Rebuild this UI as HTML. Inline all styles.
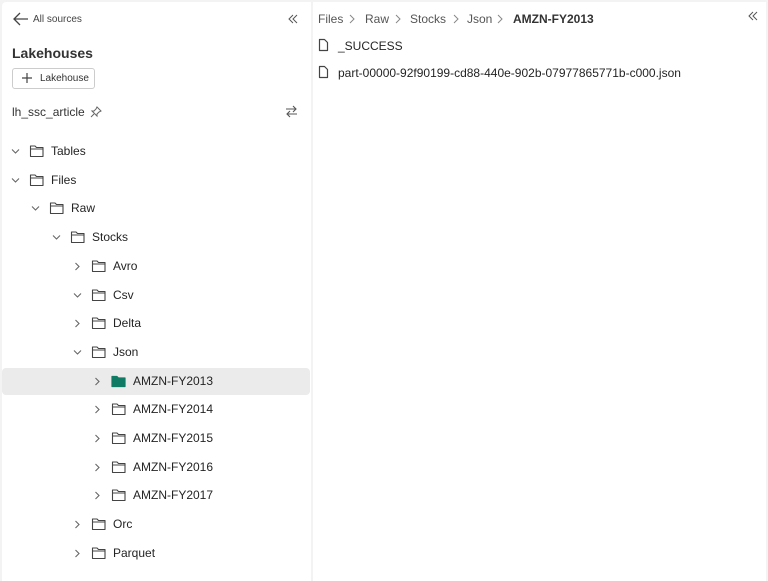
<!DOCTYPE html>
<html><head><meta charset="utf-8"><style>
*{margin:0;padding:0;box-sizing:border-box}
body{width:768px;height:581px;background:#f3f3f3;font-family:"Liberation Sans",sans-serif;color:#242424;position:relative;overflow:hidden}
.lp{position:absolute;left:2px;top:2px;width:309px;height:579px;background:#fff;border-radius:4px 0 0 0}
.rp{position:absolute;left:313px;top:2px;width:453px;height:579px;background:#fff}
.t{position:absolute;font-size:12px;white-space:nowrap}
.row{position:absolute;left:0;width:308px;height:27px}
.row .c{position:absolute;top:9px}
.row .f{position:absolute;top:6px}
.row .l{position:absolute;top:6px;font-size:12px}
</style></head><body>
<div class="lp">
<svg style="position:absolute;left:11px;top:10px" width="16" height="14" viewBox="0 0 16 14"><path d="M7 1L1 7l6 6M1 7h14" stroke="#444" stroke-width="1.3" fill="none"/></svg>
<div class="t" style="left:31px;top:12px;font-size:10px;color:#444">All sources</div>
<svg style="position:absolute;left:286px;top:12px" width="10" height="10" viewBox="0 0 10 10"><path d="M5 1L1 5l4 4M9 1L5 5l4 4" stroke="#555" stroke-width="1" fill="none"/></svg>
<div class="t" style="left:10px;top:43px;font-size:14px;font-weight:bold;color:#333">Lakehouses</div>
<div style="position:absolute;left:10px;top:66px;width:83px;height:21px;border:1px solid #ccc;border-radius:3px"></div>
<svg style="position:absolute;left:19px;top:70px" width="12" height="12" viewBox="0 0 12 12"><path d="M6 1v10M1 6h10" stroke="#444" stroke-width="1.2"/></svg>
<div class="t" style="left:38px;top:71px;font-size:10px;color:#333">Lakehouse</div>
<div class="t" style="left:10px;top:103px;font-size:12px;color:#333">lh_ssc_article</div>
<svg style="position:absolute;left:88px;top:104px" width="12" height="12" viewBox="0 0 12 12"><path d="M7 1l4 4-2 1-2 2v2L2 5h2l2-2z M4 8L1 11" stroke="#666" stroke-width="1" fill="none"/></svg>
<svg style="position:absolute;left:283px;top:103px" width="13" height="13" viewBox="0 0 13 13"><path d="M1 4h10M8 1l3 3-3 3M12 9H2M5 6L2 9l3 3" stroke="#555" stroke-width="1.1" fill="none"/></svg>
<div id="tree"></div>
</div>
<div class="rp">
<div class="t" style="left:5px;top:10px;color:#555">Files</div>
<div class="t" style="left:52px;top:10px;color:#555">Raw</div>
<div class="t" style="left:97px;top:10px;color:#555">Stocks</div>
<div class="t" style="left:154px;top:10px;color:#555">Json</div>
<div class="t" style="left:200px;top:10px;font-weight:bold;color:#333">AMZN-FY2013</div>
<svg style="position:absolute;left:36px;top:12px" width="6" height="10" viewBox="0 0 6 10"><path d="M1 1l4 4-4 4" stroke="#888" fill="none"/></svg>
<svg style="position:absolute;left:82px;top:12px" width="6" height="10" viewBox="0 0 6 10"><path d="M1 1l4 4-4 4" stroke="#888" fill="none"/></svg>
<svg style="position:absolute;left:140px;top:12px" width="6" height="10" viewBox="0 0 6 10"><path d="M1 1l4 4-4 4" stroke="#888" fill="none"/></svg>
<svg style="position:absolute;left:184px;top:12px" width="6" height="10" viewBox="0 0 6 10"><path d="M1 1l4 4-4 4" stroke="#888" fill="none"/></svg>
<svg style="position:absolute;left:435px;top:9px" width="10" height="10" viewBox="0 0 10 10"><path d="M5 1L1 5l4 4M9 1L5 5l4 4" stroke="#555" stroke-width="1" fill="none"/></svg>
<svg style="position:absolute;left:5px;top:36px" width="11" height="14" viewBox="0 0 11 14"><path d="M1.5 1.5h5l3 3v8h-8z" stroke="#444" stroke-width="1.2" fill="none" stroke-linejoin="round"/></svg>
<div class="t" style="left:25px;top:37px">_SUCCESS</div>
<svg style="position:absolute;left:5px;top:63px" width="11" height="14" viewBox="0 0 11 14"><path d="M1.5 1.5h5l3 3v8h-8z" stroke="#444" stroke-width="1.2" fill="none" stroke-linejoin="round"/></svg>
<div class="t" style="left:25px;top:64px">part-00000-92f90199-cd88-440e-902b-07977865771b-c000.json</div>
</div>
<script>
var rows=[[0,"Tables",1],[0,"Files",1],[1,"Raw",1],[2,"Stocks",1],[3,"Avro",0],[3,"Csv",1],[3,"Delta",0],[3,"Json",1],[4,"AMZN-FY2013",0,1],[4,"AMZN-FY2014",0],[4,"AMZN-FY2015",0],[4,"AMZN-FY2016",0],[4,"AMZN-FY2017",0],[3,"Orc",0],[3,"Parquet",0]];
var h="";rows.forEach(function(r,i){var top=136+i*28.7;var cx=[9,29,50,71,91][r[0]];
var chev=r[2]?'<path d="M1 2.5l3.5 3.5 3.5-3.5" stroke="#666" stroke-width="1.1" fill="none"/>':'<path d="M2.5 1l3.5 3.5-3.5 3.5" stroke="#666" stroke-width="1.1" fill="none"/>';
var fold=r[3]?'<path d="M1 2.5h5l1.5 1.5H14v8.5H1z" fill="#0f7b64" stroke="#0f7b64" stroke-width="1.2" stroke-linejoin="round"/>':'<path d="M1.5 2h4.5l1.5 1.5h6.5v9h-12.5zM1.5 5h12.5" stroke="#444" stroke-width="1.1" fill="none" stroke-linejoin="round"/>';
h+='<div class="row" style="top:'+top+'px;'+(r[3]?'background:#ebebeb;border-radius:4px;':'')+'"><svg class="c" style="left:'+cx+'px" width="9" height="9" viewBox="0 0 9 9">'+chev+'</svg><svg class="f" style="left:'+(cx+18)+'px" width="16" height="15" viewBox="0 0 16 15">'+fold+'</svg><div class="l" style="left:'+(cx+40)+'px">'+r[1]+'</div></div>';});
document.getElementById("tree").innerHTML=h;
</script>
</body></html>
